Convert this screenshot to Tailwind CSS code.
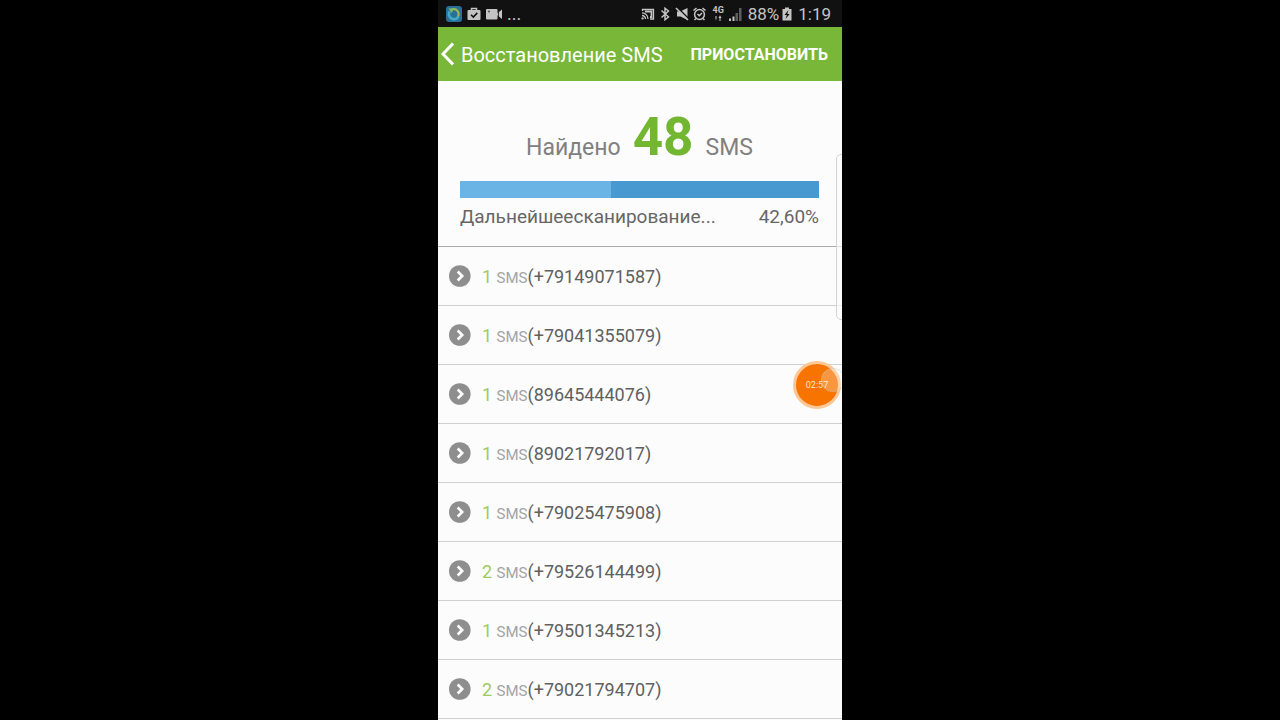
<!DOCTYPE html>
<html lang="ru">
<head>
<meta charset="utf-8">
<meta name="viewport" content="width=device-width, initial-scale=1">
<title>Восстановление SMS</title>
<script src="https://cdn.jsdelivr.net/npm/@tailwindcss/browser@4"></script>
</head>
<body class="bg-black font-[Roboto,sans-serif]">
<div class="relative mx-auto min-h-screen w-full max-w-[404px] overflow-hidden bg-[#fcfcfc]">

  <!-- Status bar -->
  <div class="flex h-[27px] items-center justify-between bg-[#111] pl-2 pr-[11px] text-[#c4c4c4]">
    <div class="flex items-center gap-1">
      <svg class="size-4" viewBox="0 0 16 16"><rect width="16" height="16" rx="3" fill="#2a6f98"/><path d="M3.500 5.500A5 5 0 0 0 12.500 10.500" fill="none" stroke="#43a9c4" stroke-width="2.600"/><path d="M6.500 3.200A5 5 0 0 1 12 10.500" fill="none" stroke="#9cba4e" stroke-width="2"/><path d="M2.500 2.500l6-.5-3 5z" fill="#7fb764"/></svg>
      <svg class="size-4" viewBox="0 0 16 16"><path d="M5.500 4V2.500h5V4" fill="none" stroke="currentColor" stroke-width="1.500"/><rect x="1.500" y="4" width="13" height="10" rx="1" fill="currentColor"/><path d="M5 8.800l2.300 2.300 4-4.200" fill="none" stroke="#111" stroke-width="1.600"/></svg>
      <svg class="h-4 w-[17px]" viewBox="0 0 17 16"><rect y="3" width="11.500" height="10.500" rx="1" fill="currentColor"/><path d="M11 7.500l5-4v9.500l-5-4z" fill="currentColor"/><path d="M12.500 3v10" stroke="#111" stroke-width=".8"/><circle cx="3" cy="5.500" r=".9" fill="#444"/></svg>
      <span class="pt-px text-lg leading-6">...</span>
    </div>
    <div class="flex items-center gap-[3px]">
      <svg class="h-4 w-[14px]" viewBox="0 0 14 16" fill="none" stroke="currentColor" stroke-width="1.300"><path d="M1.500 5V3.500h11v9.500H9"/><path d="M1 6.800a6 6 0 0 1 6 6.200M1 9.500a3.500 3.500 0 0 1 3.500 3.500"/><circle cx="1.600" cy="12.400" r=".5"/><path d="M4 5.500h6.500v5.500H9" stroke-width="1.800"/></svg>
      <svg class="h-4 w-[14px]" viewBox="0 0 14 16" fill="none" stroke="currentColor" stroke-width="1.500"><path d="M3.500 4.500l7 6.500L7 13.800V2.200L10.500 5l-7 6.500"/></svg>
      <svg class="h-4 w-[14px]" viewBox="0 0 14 16"><path d="M2 5.500h3l7.500-3.500v12L5.500 10.500H2z" fill="currentColor"/><path d="M2.500 1.500l11 11" stroke="#111" stroke-width="1.500"/><path d="M1 2l12 12" stroke="currentColor" stroke-width="1.500"/></svg>
      <svg class="h-4 w-[15px]" viewBox="0 0 15 16" fill="none" stroke="currentColor" stroke-width="1.500"><circle cx="7.500" cy="8.500" r="4.900"/><path d="M1.500 4.500l3-2.500M13.500 4.500l-3-2.500M5.500 8l1.800 1.800L10 7M4 12.500L2.500 14M11 12.500l1.500 1.500"/></svg>
      <div class="ml-0.5 flex w-[13px] flex-col items-center">
        <span class="text-[9px] leading-[9px] font-bold">4G</span>
        <svg class="h-[6px] w-[10px]" viewBox="0 0 10 6"><path d="M3 1v2M7 3v3" stroke="currentColor"/><path d="M1.800 2.500h2.400L3 5.500z" fill="#777"/><path d="M5.500 3h3L7 .3z" fill="currentColor"/></svg>
      </div>
      <svg class="h-4 w-[14px]" viewBox="0 0 14 16"><path d="M1 12.500h2V15H1zM4.500 10.500h2V15h-2z" fill="currentColor"/><path d="M7.500 7H10v8H7.500zM11 2h2.500v13H11z" fill="#5e5e5e"/></svg>
      <span class="ml-[3px] text-[17px] leading-6">88%</span>
      <svg class="h-4 w-[10px]" viewBox="0 0 10 16"><path d="M3 1.500h4V3h2.500v11.500h-9V3H3z" fill="currentColor"/><path d="M6.500 4L2.500 9h2.300l-1.300 4 4.200-5H5.300z" fill="#111"/></svg>
      <span class="ml-[3px] text-[17px] leading-6">1:19</span>
    </div>
  </div>

  <!-- App bar -->
  <header class="flex h-[54px] items-center justify-between bg-[#78b738] pl-[3px] pr-[14px] text-white">
    <div class="flex items-center gap-[7px]">
      <button type="button" aria-label="Назад" class="flex"><svg class="h-6 w-[13px]" viewBox="0 0 13 24" fill="none" stroke="currentColor" stroke-width="3"><path d="M12 1.500L2 12l10 10.500"/></svg></button>
      <h1 class="pt-0.5 text-xl whitespace-nowrap">Восстановление SMS</h1>
    </div>
    <button type="button" class="pt-0.5 text-base font-bold">ПРИОСТАНОВИТЬ</button>
  </header>

  <!-- Scan summary -->
  <section class="border-b border-[#aaadab] pr-[23px] pl-[22px] pt-6 pb-[15px] text-[#666]">
    <p class="flex items-baseline justify-center gap-3 text-[23px] leading-[64px] text-[#808080]">
      <span>Найдено</span>
      <strong class="text-[53px] leading-[64px] font-bold text-[#72b632]">48</strong>
      <span>SMS</span>
    </p>
    <div role="progressbar" aria-label="Сканирование" aria-valuenow="42.6" aria-valuemin="0" aria-valuemax="100" class="mt-px h-[17px] bg-[#4799d0]">
      <div class="h-full bg-[#69b3e5]" style="width:42%"></div>
    </div>
    <div class="mt-[5px] flex justify-between text-[19px] leading-7">
      <span>Дальнейшеесканирование...</span>
      <span>42,60%</span>
    </div>
  </section>

  <!-- Found messages -->
  <ul id="list"></ul>
  <template id="row">
    <li class="border-b border-[#ced0d2]">
      <a href="#" class="flex h-[58px] items-center gap-[11px] pl-[11px]">
        <svg class="size-[22px] shrink-0" viewBox="0 0 22 22"><circle cx="10.800" cy="11" r="10.800" fill="#8e8e8e"/><path d="M8.700 6.500l4.500 4.500-4.500 4.500" fill="none" stroke="#fff" stroke-width="2.600"/></svg>
        <span class="pt-0.5 text-lg text-[#606060]"><span class="count text-[#9dcb5c]"></span> <span class="text-[15px] text-[#a3a3a3]">SMS</span><span class="phone"></span></span>
      </a>
    </li>
  </template>

  <!-- Edge panel handle -->
  <div class="absolute top-[154px] -right-1 h-[166px] w-[10px] rounded-md border border-[#d2d2d2] bg-[#fcfcfc]/60"></div>

  <!-- Floating recording timer -->
  <button type="button" class="absolute top-[361px] right-[1px] flex size-12 items-center justify-center rounded-full border-[3px] border-[#fdc898] bg-[#f77400] pt-px text-[9px] text-[#ffe3c8]">02:57</button>
  <div class="pointer-events-none absolute top-[368px] -right-[3px] size-6 rounded-full border border-[#bbb]/40 bg-white/25"></div>
</div>
<script>
  const threads = [
    [1, '+79149071587'], [1, '+79041355079'], [1, '89645444076'], [1, '89021792017'],
    [1, '+79025475908'], [2, '+79526144499'], [1, '+79501345213'], [2, '+79021794707']
  ];
  const row = document.getElementById('row');
  for (const [count, phone] of threads) {
    const item = row.content.cloneNode(true);
    item.querySelector('.count').textContent = count;
    item.querySelector('.phone').textContent = `(${phone})`;
    document.getElementById('list').append(item);
  }
</script>
</body>
</html>
